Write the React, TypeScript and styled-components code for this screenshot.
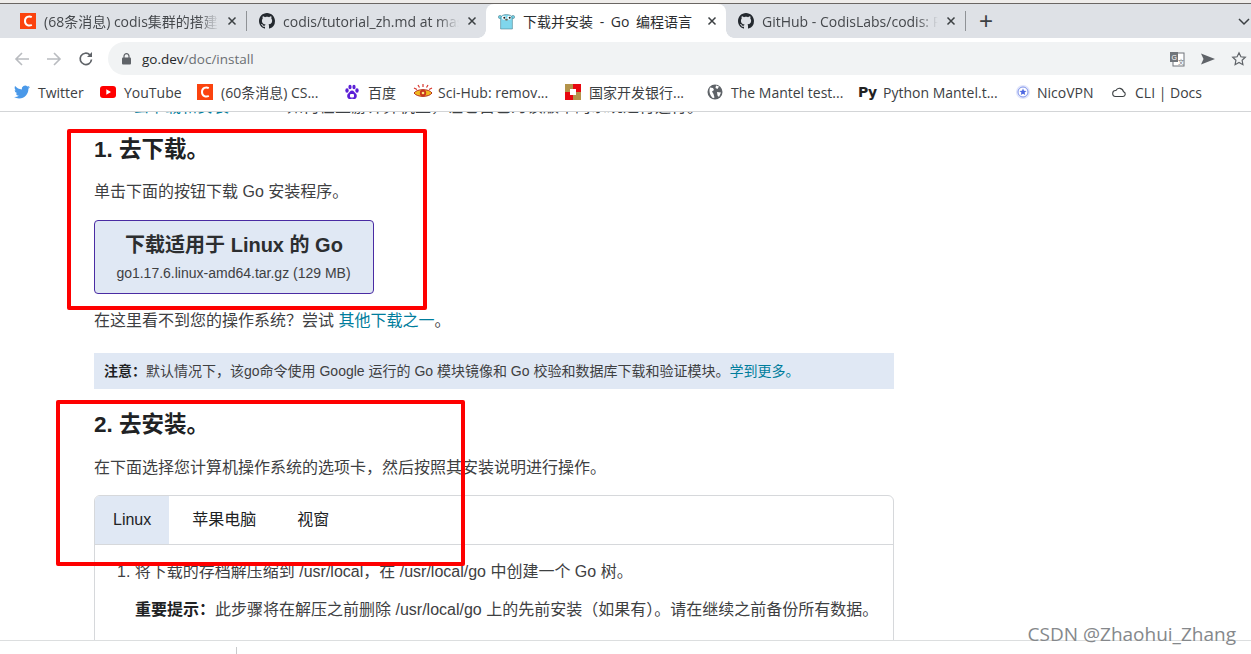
import React, { FC } from "react";
import styled, { createGlobalStyle } from "styled-components";

const GlobalStyle = createGlobalStyle`
  html, body {
    margin: 0;
    height: 100%;
    background: #fff;
    overflow: hidden;
  }
`;

const SANS = `"Liberation Sans", "Noto Sans CJK SC", sans-serif`;
const UI = `"Open Sans", "Noto Sans CJK SC", sans-serif`;

const CsdnIcon: FC = () => (
  <svg width="16" height="16" viewBox="0 0 16 16">
    <rect width="16" height="16" fill="#fb430e" />
    <path d="M11.800 4.100C9 2.600 5 3.800 5 8s4 5.400 6.800 3.900" fill="none" stroke="#fff" strokeWidth="2" />
  </svg>
);

const GithubIcon: FC = () => (
  <svg width="16" height="16" viewBox="0 0 16 16" fill="#24292f">
    <path d="M8 0C3.580 0 0 3.580 0 8c0 3.540 2.290 6.530 5.470 7.590.4.070.55-.17.55-.38 0-.19-.01-.82-.01-1.490-2.010.37-2.530-.49-2.690-.94-.09-.23-.48-.94-.82-1.130-.28-.15-.68-.52-.01-.53.63-.01 1.080.58 1.230.82.720 1.210 1.870.87 2.330.66.070-.52.280-.87.510-1.070-1.780-.2-3.640-.89-3.640-3.950 0-.87.310-1.590.820-2.150-.08-.2-.36-1.020.08-2.120 0 0 .67-.21 2.200.82.640-.18 1.320-.27 2-.27s1.360.09 2 .27c1.530-1.040 2.200-.82 2.200-.82.440 1.100.160 1.920.080 2.120.510.560.820 1.270.820 2.150 0 3.070-1.870 3.750-3.650 3.950.290.250.540.730.540 1.480 0 1.070-.01 1.930-.01 2.200 0 .210.150.460.550.380A8.010 8.010 0 0 0 16 8c0-4.420-3.580-8-8-8z" />
  </svg>
);

const GopherIcon: FC = () => (
  <svg width="17" height="17" viewBox="0 0 17 17">
    <circle cx="2" cy="4" r="1.600" fill="#6fd3e8" stroke="#3f6f7d" strokeWidth="0.500" />
    <circle cx="15" cy="4" r="1.600" fill="#6fd3e8" stroke="#3f6f7d" strokeWidth="0.500" />
    <path d="M2.600 5.500C2.600 2.800 5.300 1.500 8.500 1.500s5.900 1.300 5.900 4V16H2.600z" fill="#7fd6ec" stroke="#3f6f7d" strokeWidth="0.500" />
    <circle cx="5.800" cy="4.800" r="2" fill="#fff" />
    <circle cx="11.200" cy="4.800" r="2" fill="#fff" />
    <circle cx="6.300" cy="4.800" r="1" fill="#1e1e1e" />
    <circle cx="11.700" cy="4.800" r="1" fill="#1e1e1e" />
    <rect x="7.200" y="6" width="2.600" height="1.500" rx="0.700" fill="#7a5a45" />
  </svg>
);

const TwitterIcon: FC = () => (
  <svg width="16" height="16" viewBox="0 0 24 24" fill="#4a99e9">
    <path d="M23.950 4.570a10 10 0 0 1-2.820.770 4.960 4.960 0 0 0 2.160-2.720c-.950.550-2 .950-3.130 1.180a4.920 4.920 0 0 0-8.380 4.480C7.690 8.100 4.070 6.130 1.640 3.160a4.820 4.820 0 0 0-.660 2.470c0 1.710.870 3.210 2.190 4.100a4.900 4.900 0 0 1-2.230-.620v.060a4.920 4.920 0 0 0 3.950 4.830 5 5 0 0 1-2.210.080 4.940 4.940 0 0 0 4.600 3.420A9.870 9.870 0 0 1 0 19.540a14 14 0 0 0 7.560 2.210c9.050 0 14-7.500 14-13.980 0-.210 0-.420-.020-.630a9.940 9.940 0 0 0 2.460-2.550z" />
  </svg>
);

const YoutubeIcon: FC = () => (
  <svg width="16" height="12" viewBox="0 0 16 12">
    <rect width="16" height="12" rx="3" fill="#f00" />
    <path d="M6.300 3.300v5.400L11 6z" fill="#fff" />
  </svg>
);

const BaiduIcon: FC = () => (
  <svg width="16" height="16" viewBox="0 0 16 16" fill="#5b1fd6">
    <ellipse cx="3" cy="6.500" rx="1.700" ry="2.200" />
    <ellipse cx="6" cy="3" rx="1.600" ry="2.300" />
    <ellipse cx="10" cy="3" rx="1.600" ry="2.300" />
    <ellipse cx="13" cy="6.500" rx="1.700" ry="2.200" />
    <path d="M8 6.500c-2 0-2.500 2-4 3.200C2.500 11 3 15 6 15c1 0 1.300-.3 2-.3s1 .3 2 .3c3 0 3.500-4 2-5.300C10.500 8.500 10 6.500 8 6.500z" />
    <rect x="6" y="10" width="4" height="3.500" rx="1" fill="#fff" />
  </svg>
);

const SciHubIcon: FC = () => (
  <svg width="20" height="16" viewBox="0 0 20 16">
    <g stroke="#d8342a" strokeWidth="1.200">
      <path d="M10 0v3M5 1l1.500 2.500M15 1l-1.500 2.500M1 4l3 1.500M19 4l-3 1.500" />
    </g>
    <path d="M1 9c3-4.500 15-4.500 18 0-3 4.500-15 4.500-18 0z" fill="#f0b81f" stroke="#b5301f" />
    <circle cx="10" cy="9" r="3.200" fill="#c9371f" />
    <circle cx="10" cy="9" r="1.300" fill="#ffe680" />
  </svg>
);

const BankIcon: FC = () => (
  <svg width="16" height="16" viewBox="0 0 16 16">
    <rect width="16" height="16" fill="#e8080f" />
    <rect width="8" height="8" fill="#b4934a" />
    <rect x="8" y="8" width="8" height="8" fill="#b4934a" />
    <rect x="5" y="5" width="6" height="6" fill="#fff" />
  </svg>
);

const GlobeIcon: FC = () => (
  <svg width="16" height="16" viewBox="0 0 16 16">
    <circle cx="8" cy="8" r="7.500" fill="#5f6368" />
    <path d="M3 3.500l3 .5 1 2-2 1.500 1.500 2.500 1 3.500-1.500.8C3.500 12 1.500 8 3 3.500zM9 1.500l3 1-1.500 2.500-2-1zM10 8l4 .5-2 4.500-1.500-1.500z" fill="#fff" />
  </svg>
);

const NicoIcon: FC = () => (
  <svg width="16" height="16" viewBox="0 0 16 16">
    <circle cx="8" cy="8" r="7" fill="#dfe4fb" />
    <circle cx="8" cy="8" r="5" fill="#fff" stroke="#7f93ea" />
    <path d="M8 4.500l1 2.300 2.500.2-1.900 1.600.6 2.400L8 9.700 5.800 11l.6-2.400L4.500 7l2.500-.2z" fill="#4d67e0" />
  </svg>
);

const CloudIcon: FC = () => (
  <svg width="16" height="16" viewBox="0 0 16 16" fill="none" stroke="#3c4043" strokeWidth="1.100">
    <path d="M4.500 12.500h7.500a2.500 2.500 0 0 0 .4-4.900 4 4 0 0 0-7.500-1.100A3 3 0 0 0 4.500 12.500z" />
  </svg>
);

const PyIcon = styled.span`
  font: 700 14px "DejaVu Sans", sans-serif;
  color: #222;
  letter-spacing: -0.5px;
  width: 17px;
`;

const CloseGlyph: FC = () => (
  <svg width="10" height="10" viewBox="0 0 10 10" stroke="#3c4043" strokeWidth="1.500">
    <path d="M1.500 1.500l7 7M8.500 1.500l-7 7" />
  </svg>
);

const Shell = styled.div`
  width: 1251px;
  height: 654px;
  display: flex;
  flex-direction: column;
  position: relative;
  overflow: hidden;
  background: #fff;
`;

const WindowEdge = styled.div`
  height: 3px;
  flex: none;
  background: #efedeb;
  border-bottom: 1px solid #6a6663;
`;

const TabStrip = styled.div`
  height: 34px;
  background: #dee1e6;
  display: flex;
  align-items: flex-end;
  flex: none;
`;

const Tab = styled.div<{ $active?: boolean; $width: number; $lead?: number }>`
  width: ${p => p.$width}px;
  height: 34px;
  flex: none;
  display: flex;
  align-items: center;
  gap: 8px;
  padding: 0 9px 0 ${p => p.$lead ?? 12}px;
  box-sizing: border-box;
  border-radius: 8px 8px 0 0;
  background: ${p => (p.$active ? "#fff" : "transparent")};
  position: relative;

  ${p =>
    p.$active &&
    `
    &::before, &::after {
      content: "";
      position: absolute;
      bottom: 0;
      width: 8px;
      height: 8px;
    }
    &::before {
      left: -8px;
      background: radial-gradient(circle at 0 0, #dee1e6 7.500px, #fff 8px);
    }
    &::after {
      right: -8px;
      background: radial-gradient(circle at 100% 0, #dee1e6 7.500px, #fff 8px);
    }
  `}
`;

const TabTitle = styled.span<{ $active?: boolean }>`
  flex: 1;
  min-width: 0;
  overflow: hidden;
  white-space: nowrap;
  font: 14px ${UI};
  color: ${p => (p.$active ? "#2b2d30" : "#45484c")};
  word-spacing: ${p => (p.$active ? 3 : 0)}px;
  -webkit-mask-image: ${p =>
    p.$active ? "none" : "linear-gradient(90deg, #000 88%, transparent)"};
`;

const TabDivider = styled.div`
  width: 1px;
  height: 20px;
  background: #8f9296;
  flex: none;
  align-self: center;
`;

const NewTab = styled.div`
  margin-left: 13px;
  align-self: center;
  font: 400 24px/24px ${SANS};
  color: #3c4043;
`;

const StripChevron = styled.div`
  margin-left: auto;
  align-self: center;
  display: flex;
`;

const Toolbar = styled.div`
  height: 33px;
  flex: none;
  display: flex;
  align-items: center;
  padding: 0 0 0 14px;
  gap: 16px;
  background: #fff;
  margin-top: 4px;
`;

const NavButton = styled.div`
  width: 16px;
  height: 16px;
  display: flex;
  align-items: center;
  justify-content: center;
`;

const Omnibox = styled.div`
  margin-left: -2px;
  flex: 1;
  height: 33px;
  background: #f1f3f4;
  border-radius: 17px 0 0 17px;
  display: flex;
  align-items: center;
  padding: 0 4px 0 14px;
  gap: 10px;
`;

const Url = styled.span`
  font: 13.500px ${UI};
  color: #6b6f73;
  b {
    font-weight: 400;
    color: #26282b;
  }
`;

const OmniIcons = styled.div`
  margin-left: auto;
  display: flex;
  align-items: center;
  gap: 15px;
`;

const Bookmarks = styled.div`
  height: 34px;
  padding: 0 0 2px 14px;
  flex: none;
  display: flex;
  align-items: center;
  border-bottom: 1px solid #d3d5d7;
`;

const Bookmark = styled.div<{ $width: number; $gap?: number }>`
  width: ${p => p.$width}px;
  flex: none;
  display: flex;
  align-items: center;
  gap: ${p => p.$gap ?? 8}px;
  white-space: nowrap;
  font: 14px ${UI};
  color: #3c4043;
`;

const Page = styled.main`
  flex: 1;
  min-height: 0;
  overflow: hidden;
  padding-left: 94px;
  font-family: ${SANS};
  color: #202224;
  background: #fff;
`;

const Article = styled.div`
  width: 800px;
`;

const TopLine = styled.div`
  height: 5px;
  overflow: hidden;
  display: flex;
  align-items: flex-end;
  font-size: 16px;
  line-height: 20px;
  padding-left: 39px;
  gap: 58px;
  color: #3c4043;
  white-space: nowrap;
  a {
    color: #007d9c;
  }
`;

const Heading = styled.h2<{ $top: number }>`
  margin: ${p => p.$top}px 0 0;
  font: 700 22.500px/30px ${SANS};
  color: #202224;
`;

const Text = styled.p<{ $top: number }>`
  margin: ${p => p.$top}px 0 0;
  font: 16px/20px ${SANS};
  color: #3e4042;
  a {
    color: #007d9c;
    text-decoration: none;
  }
`;

const DownloadButton = styled.div`
  margin-top: 18px;
  width: 280px;
  height: 74px;
  box-sizing: border-box;
  border: 1px solid #4a2ca3;
  border-radius: 4px;
  background: #e0e8f4;
  display: flex;
  flex-direction: column;
  align-items: center;
  padding-top: 11px;
`;

const DownloadTitle = styled.div`
  font: 700 20px/26px ${SANS};
  color: #2c2e30;
`;

const DownloadFile = styled.div`
  margin-top: 5px;
  margin-right: 1px;
  font: 14px/20px ${SANS};
  color: #3e4042;
`;

const Note = styled.div`
  margin-top: 22px;
  height: 36px;
  padding: 0 10px;
  display: flex;
  align-items: center;
  background: #e0e8f4;
  font: 14px/20px ${SANS};
  color: #3e4042;
  white-space: nowrap;
  a {
    color: #007d9c;
  }
  b {
    color: #202224;
  }
`;

const TabsCard = styled.div`
  margin-top: 17px;
  border: 1px solid #d6d8db;
  border-radius: 6px 6px 0 0;
  height: 200px;
`;

const TabRow = styled.div`
  height: 48px;
  display: flex;
  border-bottom: 1px solid #d6d8db;
`;

const OsTab = styled.div<{ $active?: boolean }>`
  padding: 0 ${p => (p.$active ? 18 : 20.5)}px;
  margin-right: ${p => (p.$active ? 2.5 : 0)}px;
  display: flex;
  align-items: center;
  font: 16px/20px ${SANS};
  color: #202224;
  background: ${p => (p.$active ? "#e0e8f4" : "transparent")};
  border-top-left-radius: ${p => (p.$active ? 5 : 0)}px;
`;

const Steps = styled.div`
  padding: 17px 0 0 22px;
`;

const Step = styled.div`
  font: 16px/20px ${SANS};
  color: #3e4042;
  white-space: nowrap;
`;

const StepNote = styled.div`
  margin: 18px 0 0 18px;
  font: 16px/20px ${SANS};
  color: #3e4042;
  white-space: nowrap;
  b {
    color: #202224;
  }
`;

const BottomBar = styled.div`
  height: 13px;
  flex: none;
  border-top: 1px solid #dcdedf;
  background: #fff;
  padding-left: 236px;
`;

const BottomTick = styled.div`
  width: 1px;
  height: 7px;
  margin-top: 6px;
  background: #c8cacc;
`;

const RedBox = styled.div<{ $x: number; $y: number; $w: number; $h: number }>`
  position: absolute;
  left: ${p => p.$x}px;
  top: ${p => p.$y}px;
  width: ${p => p.$w}px;
  height: ${p => p.$h}px;
  box-sizing: border-box;
  border: 4px solid #fe0000;
  border-radius: 2px;
  pointer-events: none;
`;

const Watermark = styled.div`
  position: absolute;
  right: 15px;
  top: 622px;
  font: 19px/24px ${UI};
  color: #85888b;
`;

const App: FC = () => (
  <Shell>
    <GlobalStyle />
    <WindowEdge />
    <TabStrip>
      <Tab $width={246} $lead={20}>
        <CsdnIcon />
        <TabTitle>(68条消息) codis集群的搭建与使用</TabTitle>
        <CloseGlyph />
      </Tab>
      <TabDivider />
      <Tab $width={239}>
        <GithubIcon />
        <TabTitle>codis/tutorial_zh.md at master</TabTitle>
        <CloseGlyph />
      </Tab>
      <Tab $active $width={240}>
        <GopherIcon />
        <TabTitle $active>下载并安装 - Go 编程语言</TabTitle>
        <CloseGlyph />
      </Tab>
      <Tab $width={239}>
        <GithubIcon />
        <TabTitle>GitHub - CodisLabs/codis: Proxy</TabTitle>
        <CloseGlyph />
      </Tab>
      <TabDivider />
      <NewTab>+</NewTab>
      <StripChevron>
        <svg width="14" height="14" viewBox="0 0 14 14" fill="none" stroke="#3c4043" strokeWidth="1.500">
          <path d="M2 5l5 5 5-5" />
        </svg>
      </StripChevron>
    </TabStrip>
    <Toolbar>
      <NavButton>
        <svg width="16" height="16" viewBox="0 0 16 16" fill="none" stroke="#b9bcc0" strokeWidth="1.600">
          <path d="M15 8H2M8 2L2 8l6 6" />
        </svg>
      </NavButton>
      <NavButton>
        <svg width="16" height="16" viewBox="0 0 16 16" fill="none" stroke="#b9bcc0" strokeWidth="1.600">
          <path d="M1 8h13M8 2l6 6-6 6" />
        </svg>
      </NavButton>
      <NavButton>
        <svg width="16" height="16" viewBox="0 0 16 16" fill="none" stroke="#5f6368" strokeWidth="1.700">
          <path d="M13.500 8.500A5.700 5.700 0 1 1 11.800 3.800" />
          <path d="M14 1v5H9z" fill="#5f6368" stroke="none" />
        </svg>
      </NavButton>
      <Omnibox>
        <svg width="10" height="12" viewBox="0 0 10 12" fill="#5f6368">
          <rect y="4.500" width="9" height="7" rx="1" />
          <path d="M2 5V3.200a2.500 2.500 0 0 1 5 0V5" fill="none" stroke="#5f6368" strokeWidth="1.200" />
        </svg>
        <Url>
          <b>go.dev</b>/doc/install
        </Url>
        <OmniIcons>
          <svg width="16" height="16" viewBox="0 0 16 16">
            <rect x="4" y="2" width="11" height="13" fill="#fff" stroke="#70757a" />
            <rect x="1" y="1" width="8" height="10" fill="#70757a" />
            <text x="2.500" y="9" fontSize="7" fill="#fff" fontFamily="Liberation Sans">G</text>
            <text x="9" y="13" fontSize="6" fill="#70757a" fontFamily="Noto Sans CJK SC">文</text>
          </svg>
          <svg width="16" height="16" viewBox="0 0 16 16" fill="#5f6368">
            <path d="M1 2.500l14 5.500-14 5.500 2.500-5.500z" />
          </svg>
          <svg width="16" height="16" viewBox="0 0 16 16" fill="none" stroke="#5f6368" strokeWidth="1.200">
            <path d="M8 1.800l1.900 4 4.400.5-3.200 3 .8 4.400L8 11.500l-3.900 2.200.8-4.400-3.200-3 4.400-.5z" />
          </svg>
        </OmniIcons>
      </Omnibox>
    </Toolbar>
    <Bookmarks>
      <Bookmark $width={86}><TwitterIcon />Twitter</Bookmark>
      <Bookmark $width={97}><YoutubeIcon />YouTube</Bookmark>
      <Bookmark $width={147}><CsdnIcon />(60条消息) CS...</Bookmark>
      <Bookmark $width={69}><BaiduIcon />百度</Bookmark>
      <Bookmark $width={152} $gap={5}><SciHubIcon />Sci-Hub: remov...</Bookmark>
      <Bookmark $width={142}><BankIcon />国家开发银行...</Bookmark>
      <Bookmark $width={151}><GlobeIcon />The Mantel test...</Bookmark>
      <Bookmark $width={157}><PyIcon>Py</PyIcon>Python Mantel.t...</Bookmark>
      <Bookmark $width={96} $gap={6}><NicoIcon />NicoVPN</Bookmark>
      <Bookmark $width={100}><CloudIcon />CLI | Docs</Bookmark>
    </Bookmarks>
    <Page>
      <Article>
        <TopLine>
          <a>去下载和安装</a>
          <span>如何在上游计算机上，让它自己为该版本的系统进行运行。</span>
        </TopLine>
        <Heading $top={18}>1. 去下载。</Heading>
        <Text $top={17}>单击下面的按钮下载 Go 安装程序。</Text>
        <DownloadButton>
          <DownloadTitle>下载适用于 Linux 的 Go</DownloadTitle>
          <DownloadFile>go1.17.6.linux-amd64.tar.gz (129 MB)</DownloadFile>
        </DownloadButton>
        <Text $top={17}>
          在这里看不到您的操作系统？尝试 <a>其他下载之一</a>。
        </Text>
        <Note>
          <b>注意：</b>默认情况下，该go命令使用 Google 运行的 Go 模块镜像和 Go 校验和数据库下载和验证模块。<a>学到更多。</a>
        </Note>
        <Heading $top={21}>2. 去安装。</Heading>
        <Text $top={18}>在下面选择您计算机操作系统的选项卡，然后按照其安装说明进行操作。</Text>
        <TabsCard>
          <TabRow>
            <OsTab $active>Linux</OsTab>
            <OsTab>苹果电脑</OsTab>
            <OsTab>视窗</OsTab>
          </TabRow>
          <Steps>
            <Step>1. 将下载的存档解压缩到 /usr/local，在 /usr/local/go 中创建一个 Go 树。</Step>
            <StepNote>
              <b>重要提示：</b>此步骤将在解压之前删除 /usr/local/go 上的先前安装（如果有）。请在继续之前备份所有数据。
            </StepNote>
          </Steps>
        </TabsCard>
      </Article>
    </Page>
    <BottomBar>
      <BottomTick />
    </BottomBar>
    <RedBox $x={67} $y={129} $w={360} $h={181} />
    <RedBox $x={56} $y={400} $w={409} $h={166} />
    <Watermark>CSDN @Zhaohui_Zhang</Watermark>
  </Shell>
);

export default App;
